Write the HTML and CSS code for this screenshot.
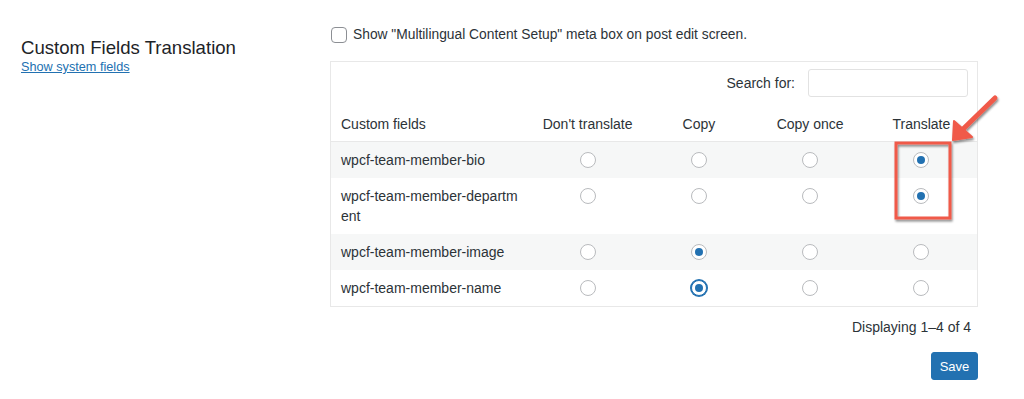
FILE: index.html
```html
<!DOCTYPE html>
<html>
<head>
<meta charset="utf-8">
<link rel="stylesheet" href="styles.css">
</head>
<body>
<div class="page">
  <div class="side">
    <h2 class="title">Custom Fields Translation</h2>
    <a class="syslink" href="#">Show system fields</a>
  </div>
  <div class="main">
    <label class="metabox"><span class="checkbox"></span>Show "Multilingual Content Setup" meta box on post edit screen.</label>
    <div class="box">
      <div class="search">
        <span class="search-label">Search for:</span>
        <span class="search-input"></span>
      </div>
      <table class="fields">
        <colgroup>
          <col class="c-name"><col class="c-opt"><col class="c-opt"><col class="c-opt"><col class="c-opt">
        </colgroup>
        <thead>
          <tr><th class="name">Custom fields</th><th>Don't translate</th><th>Copy</th><th>Copy once</th><th>Translate</th></tr>
        </thead>
        <tbody>
          <tr class="alt"><td class="name">wpcf-team-member-bio</td><td><span class="radio"></span></td><td><span class="radio"></span></td><td><span class="radio"></span></td><td><span class="radio on"></span></td></tr>
          <tr><td class="name">wpcf-team-member-department</td><td><span class="radio"></span></td><td><span class="radio"></span></td><td><span class="radio"></span></td><td><span class="radio on"></span></td></tr>
          <tr class="alt"><td class="name">wpcf-team-member-image</td><td><span class="radio"></span></td><td><span class="radio on"></span></td><td><span class="radio"></span></td><td><span class="radio"></span></td></tr>
          <tr><td class="name">wpcf-team-member-name</td><td><span class="radio"></span></td><td><span class="radio on focus"></span></td><td><span class="radio"></span></td><td><span class="radio"></span></td></tr>
        </tbody>
      </table>
    </div>
    <div class="count">Displaying 1–4 of 4</div>
    <div class="actions"><button class="save">Save</button></div>
  </div>
</div>
<svg class="annot" width="1024" height="399" viewBox="0 0 1024 399">
  <defs>
    <filter id="sh" x="-20%" y="-20%" width="140%" height="140%">
      <feDropShadow dx="1" dy="2" stdDeviation="1.2" flood-color="#000" flood-opacity="0.45"/>
    </filter>
  </defs>
  <g filter="url(#sh)">
    <rect x="896" y="143" width="54" height="75" fill="none" stroke="#f05a4a" stroke-width="3"/>
    <line x1="995" y1="98" x2="960" y2="132" stroke="#f05a4a" stroke-width="5" stroke-linecap="round"/>
    <polygon points="953,140 954,121 972,137" fill="#f05a4a" stroke="#f05a4a" stroke-width="2" stroke-linejoin="round"/>
  </g>
</svg>
</body>
</html>
```
FILE: styles.css
```css
html, body {
  margin: 0;
  padding: 0;
  background: #ffffff;
}
body {
  font-family: "Liberation Sans", Arial, sans-serif;
  color: #2c3338;
  width: 1024px;
  height: 399px;
  position: relative;
  overflow: hidden;
}
.page {
  display: flex;
}
.side {
  width: 309px;
  padding-left: 21px;
  padding-top: 37px;
}
.title {
  margin: 0;
  font-weight: normal;
  font-size: 18.6px;
  line-height: 22px;
  color: #1d2327;
}
.syslink {
  display: block;
  font-size: 12.7px;
  line-height: 15px;
  margin-top: 1px;
  color: #2271b1;
  text-decoration: underline;
}
.main {
  width: 648px;
  padding-top: 26px;
}
.metabox {
  display: flex;
  align-items: center;
  font-size: 13.8px;
  line-height: 18px;
  color: #2c3338;
  height: 18px;
  margin-left: 1px;
}
.checkbox {
  width: 14px;
  height: 14px;
  border: 1px solid #8c8f94;
  border-radius: 4px;
  margin-right: 6px;
  box-sizing: content-box;
}
.box {
  margin-top: 17px;
  border: 1px solid #e8e8e8;
}
.search {
  display: flex;
  justify-content: flex-end;
  align-items: center;
  padding: 7px 9px 8px 0;
  gap: 13px;
}
.search-label {
  font-size: 14px;
}
.search-input {
  width: 158px;
  height: 26px;
  border: 1px solid #e2e2e2;
  border-radius: 3px;
}
.fields {
  width: 100%;
  border-collapse: collapse;
  table-layout: fixed;
  font-size: 14px;
}
.c-name { width: 201px; }
.fields th {
  font-weight: normal;
  height: 34px;
  padding: 2px 0 0 0;
  text-align: center;
  vertical-align: middle;
  line-height: 20px;
  border-bottom: 1px solid #e8e8e8;
}
.fields td {
  padding: 8px 0;
  text-align: center;
  vertical-align: top;
  line-height: 20px;
}
.fields .name {
  text-align: left;
  padding-left: 10px;
  padding-right: 10px;
  word-break: break-all;
}
.fields th.name {
  padding-left: 10px;
}
.fields tr.alt td {
  background: #f6f7f7;
}
.radio {
  display: inline-block;
  width: 14px;
  height: 14px;
  border: 1px solid #b9bbbe;
  border-radius: 50%;
  background: #fff;
  vertical-align: top;
  margin-top: 2px;
  position: relative;
}
.radio.on::after {
  content: "";
  position: absolute;
  left: 3px;
  top: 3px;
  width: 8px;
  height: 8px;
  border-radius: 50%;
  background: #2271b1;
}
.radio.focus {
  border-color: #2271b1;
  box-shadow: 0 0 0 1px #2271b1;
}
.count {
  text-align: right;
  font-size: 14px;
  line-height: 20px;
  margin-top: 10px;
  padding-right: 7px;
}
.actions {
  display: flex;
  justify-content: flex-end;
  margin-top: 15px;
}
.save {
  font-family: "Liberation Sans", Arial, sans-serif;
  background: #2271b1;
  color: #fff;
  border: 1px solid #2271b1;
  border-radius: 3px;
  font-size: 13px;
  height: 28px;
  width: 47px;
  padding: 0;
}
.annot {
  position: absolute;
  left: 0;
  top: 0;
  pointer-events: none;
}
```
